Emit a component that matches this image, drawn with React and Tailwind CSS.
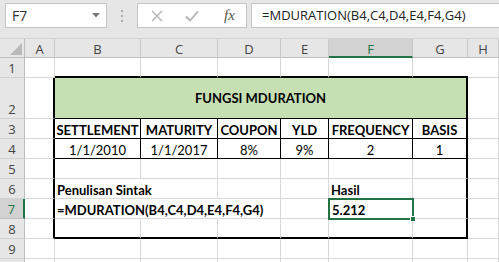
import React from 'react';

const cols = ['A', 'B', 'C', 'D', 'E', 'F', 'G', 'H'];

const head = "bg-[#e6e6e6] text-[#444] border-r border-b border-r-[#c9c9c9] border-b-[#bdbdbd] flex items-end justify-center pb-[1px] leading-none";
const rowHead = "bg-[#e6e6e6] text-[#444] border-r border-b border-r-[#bdbdbd] border-b-[#d0d0d0] flex items-end justify-center pb-[2px] leading-none";
const grid = "border-r border-b border-[#d9d9d9]";

const RowHead = ({ n, active }) => (
    <div
        className={active ? "bg-[#d2d2d2] text-[#217346] border-r-2 border-b border-r-[#217346] border-b-[#c0c0c0] flex items-end justify-center pb-[2px] leading-none" : rowHead}
        style={{ fontFamily: '"Open Sans", sans-serif', fontSize: 13 }}
    >
        {n}
    </div>
);

// plain gridline cells, for rows / columns outside the table
const Blank = ({ className }) => <div className={className || grid}></div>;

export default function App() {
    return (
        <div className="w-[499px] h-[262px] overflow-hidden bg-white" style={{ fontFamily: '"Open Sans", sans-serif' }}>
            {/* Name box + formula bar */}
            <div className="h-[39px] bg-[#e6e6e6] flex items-start pt-[3px] border-b border-[#d4d4d4]">
                <div className="ml-[5px] w-[102px] h-[25px] bg-white border border-[#c6c6c6] flex items-center justify-between pl-[6px] pr-[6px]">
                    <span className="text-[14px] text-[#333]">F7</span>
                    <svg width="8" height="5" viewBox="0 0 8 5"><path d="M0 0h8L4 4.5z" fill="#7a7a7a" /></svg>
                </div>
                <div className="w-[30px] h-[25px] flex flex-col items-center justify-center gap-[3px]">
                    <span className="w-[2px] h-[2px] bg-[#a8a8a8]"></span>
                    <span className="w-[2px] h-[2px] bg-[#a8a8a8]"></span>
                    <span className="w-[2px] h-[2px] bg-[#a8a8a8]"></span>
                </div>
                <div className="w-[110px] h-[25px] bg-white border border-[#c6c6c6] flex items-center pl-[13px]">
                    <svg width="12" height="12" viewBox="0 0 12 12"><path d="M1 1l10 10M11 1L1 11" stroke="#b4b4b4" strokeWidth="1.4" fill="none" /></svg>
                    <svg className="ml-[22px]" width="14" height="12" viewBox="0 0 14 12"><path d="M1 6.5l4 4L13 1.5" stroke="#b4b4b4" strokeWidth="1.8" fill="none" /></svg>
                    <span className="ml-[25px] text-[15px] italic text-[#555]" style={{ fontFamily: '"Liberation Serif", serif' }}>fx</span>
                </div>
                <div className="ml-[4px] flex-1 h-[25px] bg-white border border-[#c6c6c6] border-r-0 flex items-center pl-[10px]">
                    <span className="text-[13px] text-[#222] whitespace-nowrap">=MDURATION(B4,C4,D4,E4,F4,G4)</span>
                </div>
            </div>

            {/* Sheet */}
            <div
                className="grid grid-cols-[25px_30px_86px_77px_63px_48px_84px_55px_31px] grid-rows-[19px_20px_41px_20px_20px_20px_20px_20px_20px_20px_20px_3px] text-[13px] leading-none"
                style={{ fontFamily: 'Lato, "Liberation Sans", sans-serif' }}
            >
                {/* column headers */}
                <div className="bg-[#e6e6e6] border-r border-b border-r-[#bdbdbd] border-b-[#bdbdbd] flex items-end justify-end p-[2px]">
                    <svg width="12" height="12" viewBox="0 0 12 12"><path d="M12 0V12H0z" fill="#b9b9b9" /></svg>
                </div>
                {cols.map((c) => (
                    <div
                        key={c}
                        className={c === 'F' ? "bg-[#d2d2d2] text-[#217346] border-r border-b-2 border-r-[#c9c9c9] border-b-[#217346] flex items-end justify-center pb-0 leading-none" : head}
                        style={{ fontFamily: '"Open Sans", sans-serif', fontSize: 13 }}
                    >
                        {c}
                    </div>
                ))}

                {/* row 1 */}
                <RowHead n={1} />
                <Blank />
                <Blank className="border-r border-r-[#d9d9d9] border-b-2 border-b-black" />
                <Blank className="border-r border-r-[#d9d9d9] border-b-2 border-b-black" />
                <Blank className="border-r border-r-[#d9d9d9] border-b-2 border-b-black" />
                <Blank className="border-r border-r-[#d9d9d9] border-b-2 border-b-black" />
                <Blank className="border-r border-r-[#d9d9d9] border-b-2 border-b-black" />
                <Blank className="border-b-2 border-b-black" />
                <Blank />

                {/* row 2 */}
                <RowHead n={2} />
                <Blank className="border-r-2 border-b border-r-black border-b-[#d9d9d9]" />
                <div className="col-span-6 bg-[#c6e0b4] border-r-2 border-b border-black flex items-center justify-center font-bold text-black">
                    FUNGSI MDURATION
                </div>
                <Blank />

                {/* row 3 */}
                <RowHead n={3} />
                <Blank className="border-r-2 border-b border-r-black border-b-[#d9d9d9]" />
                {['SETTLEMENT', 'MATURITY', 'COUPON', 'YLD', 'FREQUENCY'].map((t) => (
                    <div key={t} className="border-r border-b border-black flex items-end justify-center pb-[1px] font-bold text-black whitespace-nowrap">{t}</div>
                ))}
                <div className="border-r-2 border-b border-black flex items-end justify-center pb-[1px] font-bold text-black">BASIS</div>
                <Blank />

                {/* row 4 */}
                <RowHead n={4} />
                <Blank className="border-r-2 border-b border-r-black border-b-[#d9d9d9]" />
                {['1/1/2010', '1/1/2017', '8%', '9%', '2'].map((t) => (
                    <div key={t} className="border-r border-b border-black flex items-end justify-center pb-[1px] text-black">{t}</div>
                ))}
                <div className="border-r-2 border-b border-black flex items-end justify-center pb-[1px] text-black">1</div>
                <Blank />

                {/* row 5 */}
                <RowHead n={5} />
                <Blank className="border-r-2 border-b border-r-black border-b-[#d9d9d9]" />
                <Blank /><Blank /><Blank /><Blank /><Blank />
                <Blank className="border-r-2 border-b border-r-black border-b-[#d9d9d9]" />
                <Blank />

                {/* row 6 */}
                <RowHead n={6} />
                <Blank className="border-r-2 border-b border-r-black border-b-[#d9d9d9]" />
                <div className={"col-span-2 flex items-end pl-[2px] pb-[1px] font-bold text-black whitespace-nowrap " + grid}>Penulisan Sintak</div>
                <Blank /><Blank />
                <div className={"flex items-end pl-[2px] pb-[1px] font-bold text-black " + grid}>Hasil</div>
                <Blank className="border-r-2 border-b border-r-black border-b-[#d9d9d9]" />
                <Blank />

                {/* row 7 */}
                <RowHead n={7} active />
                <Blank className="border-r-2 border-b border-r-black border-b-[#d9d9d9]" />
                <div className={"col-span-3 flex items-end pl-[2px] pb-[1px] font-bold text-black whitespace-nowrap " + grid}>=MDURATION(B4,C4,D4,E4,F4,G4)</div>
                <Blank />
                <div className="relative -ml-px -mt-px h-[22px] w-[86px] border-2 border-[#217346] flex items-end pl-[2px] pb-[1px] font-bold text-black">
                    5.212
                    <span className="absolute -right-[4px] -bottom-[4px] w-[6px] h-[6px] bg-[#217346] border border-white"></span>
                </div>
                <Blank className="border-r-2 border-b border-r-black border-b-[#d9d9d9]" />
                <Blank />

                {/* row 8 */}
                <RowHead n={8} />
                <Blank className="border-r-2 border-b border-r-black border-b-[#d9d9d9]" />
                <Blank className="border-r border-r-[#d9d9d9] border-b-2 border-b-black" />
                <Blank className="border-r border-r-[#d9d9d9] border-b-2 border-b-black" />
                <Blank className="border-r border-r-[#d9d9d9] border-b-2 border-b-black" />
                <Blank className="border-r border-r-[#d9d9d9] border-b-2 border-b-black" />
                <Blank className="border-r border-r-[#d9d9d9] border-b-2 border-b-black" />
                <Blank className="border-r-2 border-b-2 border-black" />
                <Blank />

                {/* row 9 and the top sliver of row 10 */}
                <RowHead n={9} />
                <Blank /><Blank /><Blank /><Blank /><Blank /><Blank /><Blank /><Blank />
                <div className="bg-[#e6e6e6] border-r border-r-[#bdbdbd]"></div>
                <Blank /><Blank /><Blank /><Blank /><Blank /><Blank /><Blank /><Blank />
            </div>
        </div>
    );
}
